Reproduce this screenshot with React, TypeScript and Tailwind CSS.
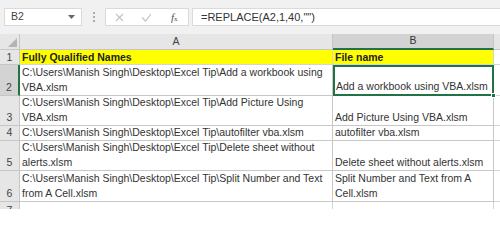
import React from 'react';

const rows = [
    { n: '2', h: 'h-[31px]', a: ['C:\\Users\\Manish Singh\\Desktop\\Excel Tip\\Add a workbook using', 'VBA.xlsm'], b: ['Add a workbook using VBA.xlsm'], sel: true },
    { n: '3', h: 'h-[30px]', a: ['C:\\Users\\Manish Singh\\Desktop\\Excel Tip\\Add Picture Using', 'VBA.xlsm'], b: ['Add Picture Using VBA.xlsm'] },
    { n: '4', h: 'h-[15px]', a: ['C:\\Users\\Manish Singh\\Desktop\\Excel Tip\\autofilter vba.xlsm'], b: ['autofilter vba.xlsm'] },
    { n: '5', h: 'h-[30px]', a: ['C:\\Users\\Manish Singh\\Desktop\\Excel Tip\\Delete sheet without', 'alerts.xlsm'], b: ['Delete sheet without alerts.xlsm'] },
    { n: '6', h: 'h-[31px]', a: ['C:\\Users\\Manish Singh\\Desktop\\Excel Tip\\Split Number and Text', 'from A Cell.xlsm'], b: ['Split Number and Text from A', 'Cell.xlsm'] },
];

function Lines({ lines }: { lines: string[] }) {
    return (
        <div className="flex flex-col">
            {lines.map((l, i) => (
                <span key={i} className="whitespace-nowrap leading-[15px]">{l}</span>
            ))}
        </div>
    );
}

export default function App() {
    return (
        <div className="w-[500px] h-[209px] overflow-hidden bg-white text-[#333] font-['Liberation_Sans',Arial,sans-serif] text-[10.5px]">
            {/* formula bar */}
            <div className="h-[34px] bg-[#f1f1f1] flex items-start pt-[8px] pl-[4px]">
                <div className="w-[78px] h-[18px] bg-white border border-[#dadada] flex items-center justify-between px-[6px]">
                    <span className="text-[#444]">B2</span>
                    <svg width="7" height="4" viewBox="0 0 7 4"><path d="M0 0h7L3.5 4z" fill="#666" /></svg>
                </div>
                <div className="w-[23px] h-[18px] flex flex-col items-center justify-center gap-[2px]">
                    <span className="w-[2px] h-[2px] bg-[#aaa]" />
                    <span className="w-[2px] h-[2px] bg-[#aaa]" />
                    <span className="w-[2px] h-[2px] bg-[#aaa]" />
                </div>
                <div className="w-[84px] h-[18px] bg-white border border-[#dadada] flex items-center">
                    <div className="w-[28px] flex justify-center">
                        <svg width="9" height="9" viewBox="0 0 9 9"><path d="M1 1l7 7M8 1L1 8" stroke="#c3c3c3" strokeWidth="1.2" /></svg>
                    </div>
                    <div className="w-[28px] flex justify-center">
                        <svg width="11" height="9" viewBox="0 0 11 9"><path d="M1 4.5l3.5 3.5L10 1" stroke="#c3c3c3" strokeWidth="1.2" fill="none" /></svg>
                    </div>
                    <div className="w-[28px] flex justify-center">
                        <span className="italic font-['Liberation_Serif',serif] text-[11px] text-[#555]">f<span className="text-[7px] not-italic">x</span></span>
                    </div>
                </div>
                <div className="flex-1 h-[18px] ml-[3px] bg-white border border-[#dadada] border-r-0 flex items-center pl-[8px] text-[11px] text-[#333]">
                    =REPLACE(A2,1,40,"")
                </div>
            </div>

            {/* sheet */}
            <div className="grid grid-cols-[20px_313px_161px_1fr]">
                {/* header row */}
                <div className="h-[16px] bg-[#e6e6e6] border-r border-b border-[#c6c6c6] relative">
                    <svg className="absolute right-[2px] bottom-[2px]" width="9" height="9" viewBox="0 0 9 9"><path d="M9 0v9H0z" fill="#b4b4b4" /></svg>
                </div>
                <div className="h-[16px] bg-[#e6e6e6] border-r border-b border-[#c6c6c6] flex items-center justify-center text-[#444]">A</div>
                <div className="h-[16px] bg-[#d3d3d3] border-r border-[#c6c6c6] border-b-2 border-b-[#217346] flex items-center justify-center text-[#333]">B</div>
                <div className="h-[16px] bg-[#e6e6e6] border-b border-[#c6c6c6]" />

                {/* row 1 */}
                <div className="h-[15px] bg-[#e6e6e6] border-r border-b border-[#c6c6c6] flex items-end justify-center text-[#444] leading-[14px]">1</div>
                <div className="h-[15px] bg-[#ffff00] border-r border-b border-[#d4d4d4] px-[2px] font-bold text-[#222] leading-[14px] flex items-end">Fully Qualified Names</div>
                <div className="h-[15px] bg-[#ffff00] border-r border-b border-[#d4d4d4] px-[2px] font-bold text-[#222] leading-[14px] flex items-end">File name</div>
                <div className="h-[15px] border-b border-[#d4d4d4]" />

                {rows.map((r) => (
                    <React.Fragment key={r.n}>
                        <div className={`${r.h} ${r.sel ? 'bg-[#d3d3d3] border-r-2 border-r-[#217346]' : 'bg-[#e6e6e6] border-r border-[#c6c6c6]'} border-b border-b-[#c6c6c6] flex items-end justify-center text-[#444]`}>
                            <span className="leading-[15px]">{r.n}</span>
                        </div>
                        <div className={`${r.h} border-r border-b border-[#c8c8c8] px-[2px] flex items-end`}>
                            <Lines lines={r.a} />
                        </div>
                        <div className={`${r.h} ${r.sel ? 'border-2 border-[#217346] px-[1px] relative' : 'border-r border-b border-[#c8c8c8] px-[2px]'} flex items-end`}>
                            <Lines lines={r.b} />
                            {r.sel && <span className="absolute right-[-4px] bottom-[-4px] w-[5px] h-[5px] bg-[#217346] border border-white" />}
                        </div>
                        <div className={`${r.h} border-b border-[#d4d4d4]`} />
                    </React.Fragment>
                ))}

                {/* row 7 */}
                <div className="h-[15px] bg-[#e6e6e6] border-r border-[#c6c6c6] flex items-end justify-center text-[#444] leading-[14px]">7</div>
                <div className="h-[15px] border-r border-[#d4d4d4]" />
                <div className="h-[15px] border-r border-[#d4d4d4]" />
                <div className="h-[15px]" />
            </div>
        </div>
    );
}
